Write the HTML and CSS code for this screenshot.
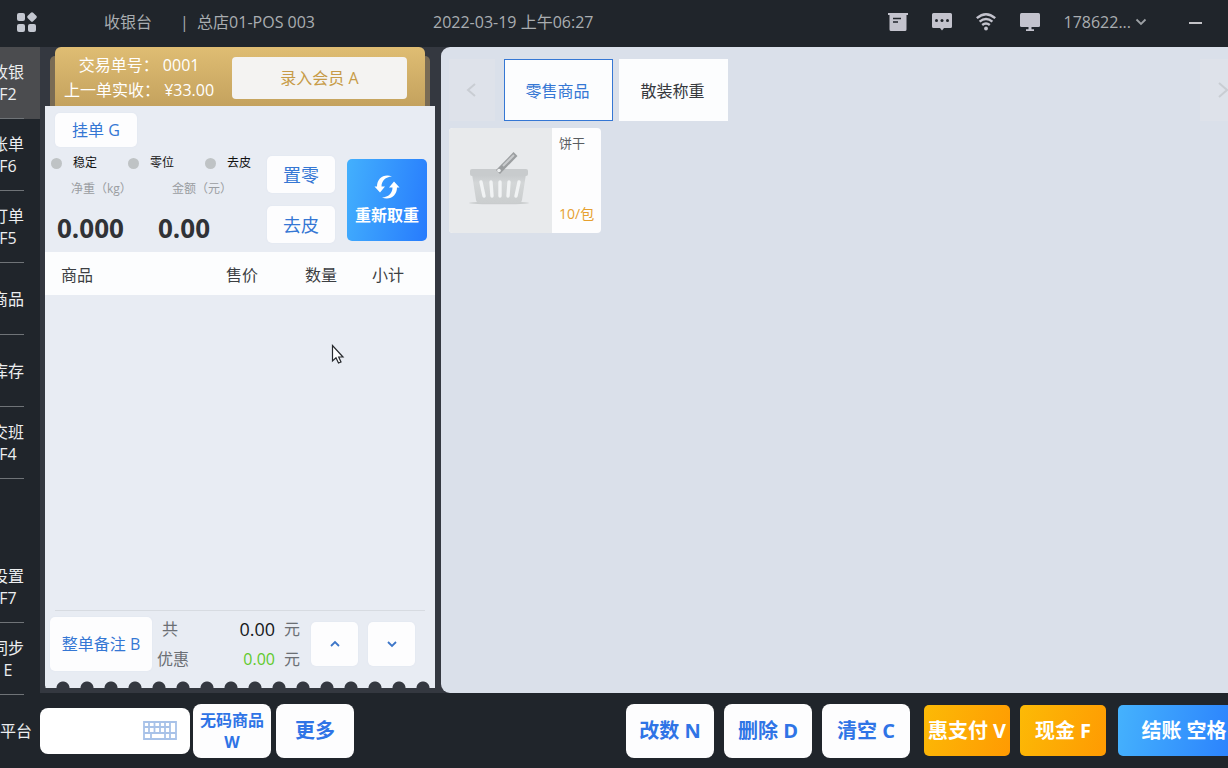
FILE: index.html
```html
<!DOCTYPE html>
<html lang="zh-CN">
<head>
    <meta charset="UTF-8">
    <meta name="viewport" content="width=device-width, initial-scale=1.0">
    <title>收银台</title>
    <link rel="stylesheet" href="styles.css">
</head>
<body>

    <header class="top-bar">
        <button class="icon-btn apps" aria-label="菜单">
            <svg width="20" height="20" viewBox="0 0 20 20" fill="#c3c7d0"><rect x="0" y="1" width="8" height="8" rx="2"/><rect x="0" y="12" width="8" height="8" rx="2"/><rect x="11" y="12" width="8" height="8" rx="2"/><rect x="11.2" y="1.2" width="7.6" height="7.6" rx="1.6" transform="rotate(45 15 5)"/></svg>
        </button>
        <span class="page-name">收银台</span>
        <span class="shop-name">|&nbsp; 总店01-POS 003</span>
        <time class="clock">2022-03-19 上午06:27</time>
        <div class="top-icons">
            <button class="icon-btn" aria-label="单据">
                <svg width="20" height="20" viewBox="0 0 20 20"><path d="M0 1h20v2h-1.500v14.500a1.500 1.500 0 0 1-1.500 1.500H3a1.500 1.500 0 0 1-1.500-1.500V3H0z" fill="#c3c3cd"/><path d="M5 6.500h8M5 10h5" stroke="#20252b" stroke-width="1.600"/></svg>
            </button>
            <button class="icon-btn" aria-label="消息">
                <svg width="20" height="20" viewBox="0 0 20 20"><path d="M1.500 1h17A1.500 1.500 0 0 1 20 2.500v12a1.500 1.500 0 0 1-1.500 1.500H12l-2 2.500L8 16H1.500A1.500 1.500 0 0 1 0 14.500v-12A1.500 1.500 0 0 1 1.500 1z" fill="#c3c3cd"/><g fill="#20252b"><circle cx="4.500" cy="8.500" r="1.500"/><circle cx="10" cy="8.500" r="1.500"/><circle cx="15.500" cy="8.500" r="1.500"/></g></svg>
            </button>
            <button class="icon-btn" aria-label="网络">
                <svg width="20" height="20" viewBox="0 0 20 20" fill="none" stroke="#c3c3cd" stroke-width="2.400"><path d="M.8 6.200q9.200-8 18.400 0M3.600 9.600q6.400-5.400 12.800 0M6.200 13q3.800-3.200 7.600 0"/><circle cx="10" cy="16.500" r="1.900" fill="#c3c3cd" stroke="none"/></svg>
            </button>
            <button class="icon-btn" aria-label="副屏">
                <svg width="20" height="20" viewBox="0 0 20 20" fill="#c3c3cd"><rect x="0" y="1" width="20" height="14" rx="1.500"/><path d="M8.500 15h3v2.300H14V19H6v-1.700h2.500z"/></svg>
            </button>
        </div>
        <button class="account">178622...
            <svg width="12" height="12" viewBox="0 0 12 12" fill="none" stroke="#9da1a5" stroke-width="1.800"><path d="M1.500 3.500 6 8l4.500-4.500"/></svg>
        </button>
        <button class="icon-btn minimize" aria-label="最小化">
            <svg width="14" height="20" viewBox="0 0 14 20"><path d="M0 11h13" stroke="#c3c3c7" stroke-width="2"/></svg>
        </button>
    </header>

    <div class="app">
        <nav class="side-nav">
            <a class="nav-item active" href="#">收银<br>F2</a>
            <a class="nav-item" href="#">账单<br>F6</a>
            <a class="nav-item" href="#">订单<br>F5</a>
            <a class="nav-item" href="#">商品</a>
            <a class="nav-item" href="#">库存</a>
            <a class="nav-item" href="#">交班<br>F4</a>
            <a class="nav-item lower" href="#">设置<br>F7</a>
            <a class="nav-item" href="#">同步<br>E</a>
            <a class="nav-item platform" href="#">平台</a>
        </nav>

        <div class="workspace">
            <main class="desk">
                <section class="receipt">
                    <div class="member-card">
                        <div class="order-info">交易单号： 0001<br>上一单实收： ¥33.00</div>
                        <button class="member-btn">录入会员 A</button>
                    </div>

                    <div class="paper">
                        <div class="scale-area">
                            <button class="white-btn hold-btn">挂单 G</button>
                            <div class="scale">
                                <div class="scale-read">
                                    <div class="lights">
                                        <span>稳定</span>
                                        <span>零位</span>
                                        <span>去皮</span>
                                    </div>
                                    <div class="readings">
                                        <div class="reading"><small>净重（kg）</small><b>0.000</b></div>
                                        <div class="reading"><small>金额（元）</small><b>0.00</b></div>
                                    </div>
                                </div>
                                <div class="scale-btns">
                                    <button class="white-btn">置零</button>
                                    <button class="white-btn">去皮</button>
                                </div>
                                <button class="reweigh">
                                    <svg width="26" height="26" viewBox="0 0 26 26" fill="#fff"><path d="M18 2.500C10-.8 3 4.500 3 12.500H.5L6 18.500l5-6H7.500C7.500 7 11.500 2.800 18 2.500z"/><path d="M8 23.500c8 3.300 15-2 15-10h2.500L20 7.500l-5 6h3.500c0 5.500-4 9.700-10.500 10z"/></svg>
                                    重新取重
                                </button>
                            </div>
                        </div>

                        <table class="cart">
                            <thead>
                                <tr><th>商品</th><th>售价</th><th>数量</th><th>小计</th></tr>
                            </thead>
                        </table>

                        <div class="summary">
                            <button class="white-btn note-btn">整单备注 B</button>
                            <dl class="totals">
                                <dt>共</dt><dd class="sum">0.00</dd><dd>元</dd>
                                <dt>优惠</dt><dd class="off">0.00</dd><dd>元</dd>
                            </dl>
                            <button class="white-btn step" aria-label="上一行">
                                <svg width="10" height="10" viewBox="0 0 10 10" fill="none" stroke="#3d76c8" stroke-width="1.800"><path d="M1 7l4-4 4 4"/></svg>
                            </button>
                            <button class="white-btn step" aria-label="下一行">
                                <svg width="10" height="10" viewBox="0 0 10 10" fill="none" stroke="#3d76c8" stroke-width="1.800"><path d="M1 3l4 4 4-4"/></svg>
                            </button>
                        </div>
                    </div>
                </section>

                <section class="goods">
                    <div class="tabs">
                        <button class="page-arrow" aria-label="上一页">
                            <svg width="12" height="18" viewBox="0 0 12 18" fill="none" stroke="#c9cdd3" stroke-width="2"><path d="M9 3 2 9l7 6"/></svg>
                        </button>
                        <button class="tab selected">零售商品</button>
                        <button class="tab">散装称重</button>
                        <button class="page-arrow next" aria-label="下一页">
                            <svg width="12" height="18" viewBox="0 0 12 18" fill="none" stroke="#c9cdd3" stroke-width="2"><path d="M1 2l8 7-8 7"/></svg>
                        </button>
                    </div>
                    <button class="product">
                        <span class="product-pic">
                            <svg width="64" height="62" viewBox="0 0 64 62">
                                <defs>
                                    <linearGradient id="basket" x1="0" y1="0" x2="0" y2="1"><stop offset="0" stop-color="#c6c9cb"/><stop offset=".3" stop-color="#d3d6d7"/><stop offset="1" stop-color="#cbcecf"/></linearGradient>
                                </defs>
                                <ellipse cx="32" cy="53" rx="30" ry="1.300" fill="#c9cccd"/>
                                <path d="M5 24h54l-4 26q-.5 3-3.500 3h-39q-3 0-3.500-3z" fill="url(#basket)"/>
                                <rect x="3" y="19" width="58" height="7" rx="2" fill="#c8cbcd"/>
                                <path d="M14 32l3 14M24 32l1 14M33 32v14M42 32l-1 14M52 32l-3 14" stroke="#f1f3f4" stroke-width="3.400" stroke-linecap="round"/>
                                <path d="M31 22 48.500 4" stroke="#9b9ea0" stroke-width="5.500"/>
                                <path d="M36 16 47 5" stroke="#c9cbcd" stroke-width="2"/>
                                <circle cx="32" cy="20.500" r="1.800" fill="#eceeef"/>
                            </svg>
                        </span>
                        <span class="product-text"><span>饼干</span><span class="price">10/包</span></span>
                    </button>
                </section>
            </main>

            <footer class="bottom-bar">
                <div class="code-box">
                    <input type="text" aria-label="商品条码">
                    <svg width="34" height="20" viewBox="0 0 34 20" fill="none" stroke="#a8c2e8" stroke-width="1.800"><path d="M1 1h32v17H1zM1 6h26M1 12h26M6 1v11M11.500 1v11M17 1v11M22 1v11M27 1v17M8 12v6M22 12v6M27 12h6"/></svg>
                </div>
                <button class="key no-code">无码商品<br>W</button>
                <button class="key">更多</button>
                <div class="actions">
                    <button class="key wide">改数 N</button>
                    <button class="key wide">删除 D</button>
                    <button class="key wide">清空 C</button>
                    <button class="pay">惠支付 V</button>
                    <button class="pay">现金 F</button>
                    <button class="pay checkout">结账 空格</button>
                </div>
            </footer>
        </div>
    </div>

    <svg class="cursor" width="14" height="21" viewBox="0 0 14 21"><path d="M1.500 1.500v15.500l3.500-3.200 2.500 5.200 2.500-1-2.300-5h4.300z" fill="#fff" stroke="#26292d" stroke-width="1.200"/></svg>

</body>
</html>
```
FILE: styles.css
```css
* {
    box-sizing: border-box;
}

body {
    margin: 0;
    height: 100vh;
    display: flex;
    flex-direction: column;
    overflow: hidden;
    background: #20252b;
    font-family: "Open Sans", "Noto Sans CJK SC", sans-serif;
    font-size: 16px;
    line-height: 22px;
}

button {
    padding: 0;
    border: 0;
    font: inherit;
    cursor: pointer;
}

svg {
    display: block;
    flex-shrink: 0;
}

/* Top bar */
.top-bar {
    height: 47px;
    flex-shrink: 0;
    display: flex;
    align-items: center;
    padding: 0 25px 4px 17px;
    color: #a9adb1;
    white-space: nowrap;
}

.icon-btn {
    background: none;
}

.page-name {
    margin-left: 67px;
}

.shop-name {
    margin-left: 28px;
}

.clock {
    margin-left: 118px;
}

.top-icons {
    display: flex;
    gap: 24px;
    margin-left: auto;
}

.account {
    display: flex;
    align-items: center;
    gap: 4px;
    margin-left: 24px;
    background: none;
    color: #a9adb1;
}

.minimize {
    margin-left: 42px;
}

.app {
    flex: 1;
    min-height: 0;
    display: flex;
}

/* Left menu, partly slid out of the window */
.side-nav {
    width: 40px;
    flex-shrink: 0;
    display: flex;
    flex-direction: column;
    align-items: flex-end;
    overflow: hidden;
}

.nav-item {
    width: 64px;
    height: 72px;
    flex-shrink: 0;
    display: flex;
    align-items: center;
    justify-content: center;
    text-align: center;
    color: #eceef0;
    text-decoration: none;
    background: linear-gradient(#6f7377, #6f7377) 16px 100% / 32px 1px no-repeat;
}

.nav-item.active {
    background-color: #4b4c4f;
}

.nav-item.lower {
    margin-top: 72px;
}

.nav-item.platform {
    justify-content: flex-end;
    padding-right: 8px;
    background: none;
}

.workspace {
    flex: 1;
    min-width: 0;
    display: flex;
    flex-direction: column;
}

.desk {
    flex: 1;
    min-height: 0;
    display: flex;
    gap: 6px;
    padding-left: 5px;
    background: #343840;
    overflow: hidden;
}

/* Receipt */
.receipt {
    width: 390px;
    flex-shrink: 0;
    display: flex;
    flex-direction: column;
    padding-bottom: 5px;
}

.member-card {
    position: relative;
    z-index: 0;
    height: 59px;
    margin: 0 10px;
    padding: 2px 18px 0 9px;
    display: flex;
    align-items: center;
    justify-content: space-between;
    border-radius: 6px 6px 0 0;
    background: linear-gradient(#dfbd73, #c4a25e);
}

.member-card::before,
.member-card::after {
    content: "";
    position: absolute;
    top: 9px;
    bottom: 0;
    width: 5px;
    background: #796b54;
}

.member-card::before {
    left: -5px;
    border-radius: 5px 0 0 0;
}

.member-card::after {
    right: -5px;
    border-radius: 0 5px 0 0;
}

.order-info {
    color: #fff;
    line-height: 25px;
    text-align: center;
    white-space: nowrap;
}

.member-btn {
    width: 175px;
    height: 42px;
    border-radius: 4px;
    background: #f4f3f2;
    color: #c79b48;
}

.paper {
    flex: 1;
    display: flex;
    flex-direction: column;
    background: radial-gradient(circle at 12px 7px, #343840 6px, transparent 7px) 6px 100% / 24px 7px repeat-x, #e8ecf3;
}

.white-btn {
    border-radius: 5px;
    background: #fdfdfe;
    color: #3577d4;
    box-shadow: 0 0 2px #dde3ee;
}

.scale-area {
    height: 146px;
    padding: 7px 8px 0 6px;
}

.hold-btn {
    display: block;
    width: 82px;
    height: 34px;
    margin-left: 4px;
}

.scale {
    display: flex;
    align-items: center;
    justify-content: space-between;
    margin-top: 9px;
}

.scale-read {
    width: 200px;
    height: 87px;
}

.lights {
    display: flex;
    justify-content: space-between;
    font-size: 12px;
    line-height: 14px;
    color: #111;
}

.lights span {
    display: flex;
    align-items: center;
    gap: 11px;
}

.lights span::before {
    content: "";
    width: 11px;
    height: 11px;
    border-radius: 50%;
    background: #bfc3c5;
}

.readings {
    display: grid;
    grid-template-columns: 101px 1fr;
    padding: 10px 0 0 6px;
}

.reading small {
    display: block;
    padding-left: 14px;
    font-size: 12px;
    line-height: 18px;
    color: #9a9da1;
    white-space: nowrap;
}

.reading b {
    display: block;
    margin-top: 14px;
    font-size: 26px;
    line-height: 32px;
    color: #303236;
}

.scale-btns {
    display: flex;
    flex-direction: column;
    gap: 13px;
    margin-left: 4px;
}

.scale-btns .white-btn {
    width: 68px;
    height: 37px;
    font-size: 18px;
}

.reweigh {
    width: 80px;
    height: 82px;
    display: flex;
    flex-direction: column;
    align-items: center;
    justify-content: center;
    gap: 4px;
    border-radius: 5px;
    background: linear-gradient(100deg, #43b0fd, #277bfd);
    color: #fff;
    font-weight: bold;
}

.cart {
    width: 100%;
    border-collapse: collapse;
    table-layout: fixed;
    background: #fcfdfe;
}

.cart th {
    height: 43px;
    padding: 2px 0 0;
    font-weight: normal;
    color: #3c3f43;
}

.cart th:first-child {
    width: 40%;
    padding-left: 16px;
    text-align: left;
}

.cart th:nth-child(2) {
    width: 21%;
}

.cart th:last-child {
    padding-left: 13px;
    text-align: left;
}

.summary {
    display: flex;
    align-items: center;
    gap: 10px;
    height: 78px;
    margin-top: auto;
    padding: 0 20px 10px 5px;
    background: linear-gradient(#d7dbe1, #d7dbe1) 50% 0 / 370px 1px no-repeat;
}

.note-btn {
    width: 102px;
    height: 54px;
    flex-shrink: 0;
}

.totals {
    flex: 1;
    display: grid;
    grid-template-columns: 32px 1fr 16px;
    column-gap: 9px;
    align-items: center;
    margin: 0 1px 0 -5px;
    line-height: 30px;
    color: #6b6f74;
    white-space: nowrap;
}

.totals dt {
    padding-left: 5px;
}

.totals dt:nth-of-type(2) {
    padding-left: 0;
}

.totals dd {
    margin: 0;
    text-align: right;
}

.totals .sum {
    font-size: 18px;
    color: #16181a;
}

.totals .off {
    color: #5fc92c;
}

.step {
    width: 47px;
    height: 44px;
    flex-shrink: 0;
    display: flex;
    align-items: center;
    justify-content: center;
}

/* Goods */
.goods {
    flex: 1;
    min-width: 0;
    margin-right: -20px;
    padding: 12px 0 0 8px;
    border-radius: 9px;
    background: #dae0ea;
}

.tabs {
    display: flex;
    gap: 6px;
}

.page-arrow {
    width: 46px;
    height: 62px;
    margin-right: 3px;
    display: flex;
    align-items: center;
    justify-content: center;
    background: #dee2ea;
}

.page-arrow.next {
    width: 48px;
    margin: 0 0 0 auto;
}

.tab {
    width: 109px;
    height: 62px;
    padding: 2px 2px 0 0;
    border: 1px solid #fcfdfe;
    background: #fcfdfe;
    color: #36393d;
}

.tab.selected {
    border-color: #3577d4;
    color: #3577d4;
}

.product {
    width: 152px;
    height: 105px;
    margin-top: 7px;
    display: flex;
    overflow: hidden;
    border-radius: 4px;
    background: #fdfdfe;
    text-align: left;
}

.product-pic {
    width: 103px;
    height: 105px;
    display: flex;
    align-items: center;
    justify-content: center;
    padding-right: 3px;
    background: #e8eaec;
}

.product-text {
    height: 105px;
    display: flex;
    flex-direction: column;
    justify-content: space-between;
    padding: 5px 0 9px 7px;
    font-size: 13px;
    line-height: 20px;
    color: #5a5d61;
}

.price {
    font-size: 14px;
    color: #e6a02f;
}

/* Bottom bar */
.bottom-bar {
    height: 75px;
    flex-shrink: 0;
    display: flex;
    align-items: center;
    overflow: hidden;
}

.code-box {
    width: 150px;
    height: 46px;
    margin-right: 3px;
    padding-right: 13px;
    flex-shrink: 0;
    display: flex;
    align-items: center;
    border-radius: 8px;
    background: #fff;
}

.code-box input {
    flex: 1;
    min-width: 0;
    height: 40px;
    border: 0;
    outline: 0;
    background: none;
    font: inherit;
}

.key {
    width: 78px;
    height: 54px;
    flex-shrink: 0;
    border-radius: 8px;
    background: #fdfdfe;
    color: #2f74e6;
    font-size: 20px;
    font-weight: bold;
}

.no-code {
    margin-right: 5px;
    font-size: 16px;
}

.key.wide {
    width: 88px;
}

.actions {
    display: flex;
    align-items: center;
    gap: 10px;
    margin: 0 -22px 0 auto;
}

.pay {
    width: 86px;
    height: 51px;
    border-radius: 5px;
    background: linear-gradient(110deg, #fcba06, #ff9a02);
    color: #fff;
    font-size: 20px;
    font-weight: bold;
    white-space: nowrap;
}

.key + .pay {
    margin-left: 4px;
}

.checkout {
    width: 132px;
    margin-left: 2px;
    background: linear-gradient(100deg, #45b2fd, #277bfd);
}

/* Mouse pointer over the cart */
.cursor {
    position: absolute;
    left: 331px;
    top: 344px;
}
```
